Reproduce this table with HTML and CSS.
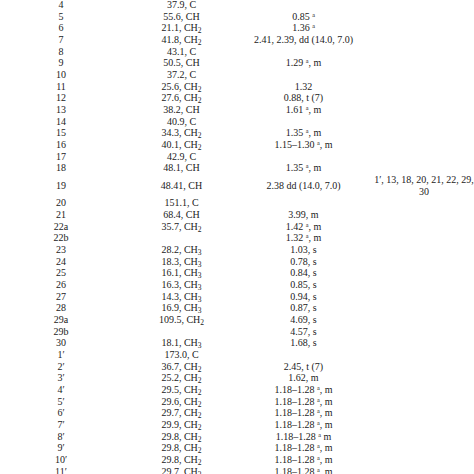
FILE: index.html
```html
<!DOCTYPE html>
<html>
<head>
<meta charset="utf-8">
<link rel="stylesheet" href="styles.css">
</head>
<body>
<div class="frame">
<table class="nmr">
<colgroup>
<col class="c-pos">
<col class="c-carbon">
<col class="c-proton">
<col class="c-hmbc">
</colgroup>
<tbody>
<tr><td>4</td><td>37.9, C</td><td></td><td></td></tr>
<tr><td>5</td><td>55.6, CH</td><td>0.85 <sup>a</sup></td><td></td></tr>
<tr><td>6</td><td>21.1, CH<sub>2</sub></td><td>1.36 <sup>a</sup></td><td></td></tr>
<tr><td>7</td><td>41.8, CH<sub>2</sub></td><td>2.41, 2.39, dd (14.0, 7.0)</td><td></td></tr>
<tr><td>8</td><td>43.1, C</td><td></td><td></td></tr>
<tr><td>9</td><td>50.5, CH</td><td>1.29 <sup>a</sup>, m</td><td></td></tr>
<tr><td>10</td><td>37.2, C</td><td></td><td></td></tr>
<tr><td>11</td><td>25.6, CH<sub>2</sub></td><td>1.32</td><td></td></tr>
<tr><td>12</td><td>27.6, CH<sub>2</sub></td><td>0.88, t (7)</td><td></td></tr>
<tr><td>13</td><td>38.2, CH</td><td>1.61 <sup>a</sup>, m</td><td></td></tr>
<tr><td>14</td><td>40.9, C</td><td></td><td></td></tr>
<tr><td>15</td><td>34.3, CH<sub>2</sub></td><td>1.35 <sup>a</sup>, m</td><td></td></tr>
<tr><td>16</td><td>40.1, CH<sub>2</sub></td><td>1.15–1.30 <sup>a</sup>, m</td><td></td></tr>
<tr><td>17</td><td>42.9, C</td><td></td><td></td></tr>
<tr><td>18</td><td>48.1, CH</td><td>1.35 <sup>a</sup>, m</td><td></td></tr>
<tr><td>19</td><td>48.41, CH</td><td>2.38 dd (14.0, 7.0)</td><td>1′, 13, 18, 20, 21, 22, 29,<br>30</td></tr>
<tr><td>20</td><td>151.1, C</td><td></td><td></td></tr>
<tr><td>21</td><td>68.4, CH</td><td>3.99, m</td><td></td></tr>
<tr><td>22a</td><td>35.7, CH<sub>2</sub></td><td>1.42 <sup>a</sup>, m</td><td></td></tr>
<tr><td>22b</td><td></td><td>1.32 <sup>a</sup>, m</td><td></td></tr>
<tr><td>23</td><td>28.2, CH<sub>3</sub></td><td>1.03, s</td><td></td></tr>
<tr><td>24</td><td>18.3, CH<sub>3</sub></td><td>0.78, s</td><td></td></tr>
<tr><td>25</td><td>16.1, CH<sub>3</sub></td><td>0.84, s</td><td></td></tr>
<tr><td>26</td><td>16.3, CH<sub>3</sub></td><td>0.85, s</td><td></td></tr>
<tr><td>27</td><td>14.3, CH<sub>3</sub></td><td>0.94, s</td><td></td></tr>
<tr><td>28</td><td>16.9, CH<sub>3</sub></td><td>0.87, s</td><td></td></tr>
<tr><td>29a</td><td>109.5, CH<sub>2</sub></td><td>4.69, s</td><td></td></tr>
<tr><td>29b</td><td></td><td>4.57, s</td><td></td></tr>
<tr><td>30</td><td>18.1, CH<sub>3</sub></td><td>1.68, s</td><td></td></tr>
<tr><td>1′</td><td>173.0, C</td><td></td><td></td></tr>
<tr><td>2′</td><td>36.7, CH<sub>2</sub></td><td>2.45, t (7)</td><td></td></tr>
<tr><td>3′</td><td>25.2, CH<sub>2</sub></td><td>1.62, m</td><td></td></tr>
<tr><td>4′</td><td>29.5, CH<sub>2</sub></td><td>1.18–1.28 <sup>a</sup>, m</td><td></td></tr>
<tr><td>5′</td><td>29.6, CH<sub>2</sub></td><td>1.18–1.28 <sup>a</sup>, m</td><td></td></tr>
<tr><td>6′</td><td>29.7, CH<sub>2</sub></td><td>1.18–1.28 <sup>a</sup>, m</td><td></td></tr>
<tr><td>7′</td><td>29.9, CH<sub>2</sub></td><td>1.18–1.28 <sup>a</sup>, m</td><td></td></tr>
<tr><td>8′</td><td>29.8, CH<sub>2</sub></td><td>1.18–1.28 <sup>a</sup> m</td><td></td></tr>
<tr><td>9′</td><td>29.8, CH<sub>2</sub></td><td>1.18–1.28 <sup>a</sup>, m</td><td></td></tr>
<tr><td>10′</td><td>29.8, CH<sub>2</sub></td><td>1.18–1.28 <sup>a</sup>, m</td><td></td></tr>
<tr><td>11′</td><td>29.7, CH<sub>3</sub></td><td>1.18–1.28 <sup>a</sup>, m</td><td></td></tr>
</tbody>
</table>
</div>
</body>
</html>
```

FILE: styles.css
```css
html, body {
  margin: 0;
  padding: 0;
  background: #ffffff;
  overflow: hidden;
}

.frame {
  width: 474px;
  height: 474px;
  overflow: hidden;
}

.nmr {
  border-collapse: collapse;
  table-layout: fixed;
  width: 482px;
  margin-top: -1.1px;
  font-family: "Liberation Serif", "Times New Roman", serif;
  font-size: 10px;
  line-height: 11.67px;
  color: #222222;
}

.c-pos { width: 122px; }
.c-carbon { width: 119px; }
.c-proton { width: 125px; }
.c-hmbc { width: 116px; }

.nmr td {
  padding: 0;
  text-align: center;
  vertical-align: middle;
  white-space: nowrap;
  height: 11.67px;
}

.nmr sub {
  font-size: 0.75em;
  line-height: 0;
  vertical-align: -0.25em;
}

.nmr sup {
  font-size: 0.62em;
  line-height: 0;
  vertical-align: 0.45em;
}
```
